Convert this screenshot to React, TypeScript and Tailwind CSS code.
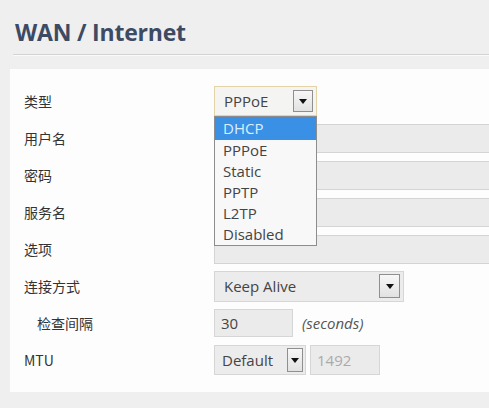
const latin = { fontFamily: '"Open Sans", "Noto Sans CJK SC", sans-serif' }
const cjk = { fontFamily: '"Noto Sans CJK SC", "Open Sans", sans-serif' }

function ArrowButton({ className }: { className: string }) {
  return (
    <span
      className={`flex items-center justify-center border border-[#8f8f8f] bg-gradient-to-b from-[#f7f7f7] to-[#e2e2e2] ${className}`}
    >
      <svg width="8" height="5" viewBox="0 0 8 5">
        <path d="M0 0 L8 0 L4 5 Z" fill="#111" />
      </svg>
    </span>
  )
}

function Label({ text, indent = false }: { text: string; indent?: boolean }) {
  return (
    <div
      className={`w-[204px] shrink-0 text-[14px] text-[#333] ${indent ? 'pl-[27px]' : 'pl-[14px]'}`}
      style={cjk}
    >
      {text}
    </div>
  )
}

const options = ['DHCP', 'PPPoE', 'Static', 'PPTP', 'L2TP', 'Disabled']

export default function App() {
  return (
    <div className="relative h-[408px] w-[489px] overflow-hidden bg-[#efefef]" style={latin}>
      {/* Title */}
      <h1 className="ml-[15px] pt-[17px] text-[23px] font-bold leading-[30px] tracking-[-0.2px] text-[#3d4a64]">
        WAN / Internet
      </h1>
      <div className="ml-[13px] mt-[7px] h-px bg-[#d3d3d3]" />
      <div className="ml-[13px] h-px bg-[#fafafa]" />

      {/* Form panel */}
      <div className="relative ml-[10px] mt-[13px] flex flex-col gap-[7px] bg-[#fdfdfd] pt-[17px] pb-[17px]">
        {/* 类型 */}
        <div className="flex h-[30px] items-center">
          <Label text="类型" />
          <div className="relative">
            <div className="flex h-[30px] w-[103px] items-center justify-between border border-[#e3d3a6] bg-[#f4f4f2] pl-[9px] pr-[3px] text-[15px] text-[#444]">
              <span>PPPoE</span>
              <ArrowButton className="h-[22px] w-[20px]" />
            </div>
            <ul className="absolute left-0 top-[30px] z-10 w-[103px] border border-[#8d8d8d] bg-[#f8f8f8] text-[15px] leading-[21px] text-[#444]">
              {options.map((o, i) => (
                <li
                  key={o}
                  className={
                    i === 0
                      ? 'h-[23px] bg-[#3a90e5] pl-[8px] leading-[23px] text-[#d8efff]'
                      : 'h-[21px] pl-[8px]'
                  }
                >
                  {o}
                </li>
              ))}
            </ul>
          </div>
        </div>

        {/* plain text rows */}
        {['用户名', '密码', '服务名', '选项'].map((t) => (
          <div key={t} className="flex h-[30px] items-center">
            <Label text={t} />
            <div className="h-[29px] flex-1 border border-r-0 border-[#d4d4d4] bg-[#ebebeb]" />
          </div>
        ))}

        {/* 连接方式 */}
        <div className="flex h-[30px] items-center">
          <Label text="连接方式" />
          <div className="flex h-[31px] w-[190px] items-center justify-between border border-[#d6d6d6] bg-[#ececec] pl-[9px] pr-[3px] text-[15px] text-[#444]">
            <span>Keep Alive</span>
            <ArrowButton className="h-[24px] w-[21px]" />
          </div>
        </div>

        {/* 检查间隔 */}
        <div className="flex h-[30px] items-center">
          <Label text="检查间隔" indent />
          <div className="flex h-[28px] w-[79px] items-center border border-[#d6d6d6] bg-[#ebebeb] pl-[6px] text-[15px] text-[#444]">
            30
          </div>
          <span className="ml-[9px] text-[15px] italic text-[#555]">(seconds)</span>
        </div>

        {/* MTU */}
        <div className="flex h-[30px] items-center">
          <Label text="MTU" />
          <div className="flex h-[30px] w-[92px] items-center justify-between border border-[#d6d6d6] bg-[#ececec] pl-[7px] pr-[2px] text-[15px] text-[#444]">
            <span>Default</span>
            <ArrowButton className="h-[24px] w-[16px]" />
          </div>
          <div className="ml-[4px] flex h-[30px] w-[70px] items-center border border-[#d6d6d6] bg-[#ebebeb] pl-[6px] text-[15px] text-[#aaa]">
            1492
          </div>
        </div>
      </div>
    </div>
  )
}
